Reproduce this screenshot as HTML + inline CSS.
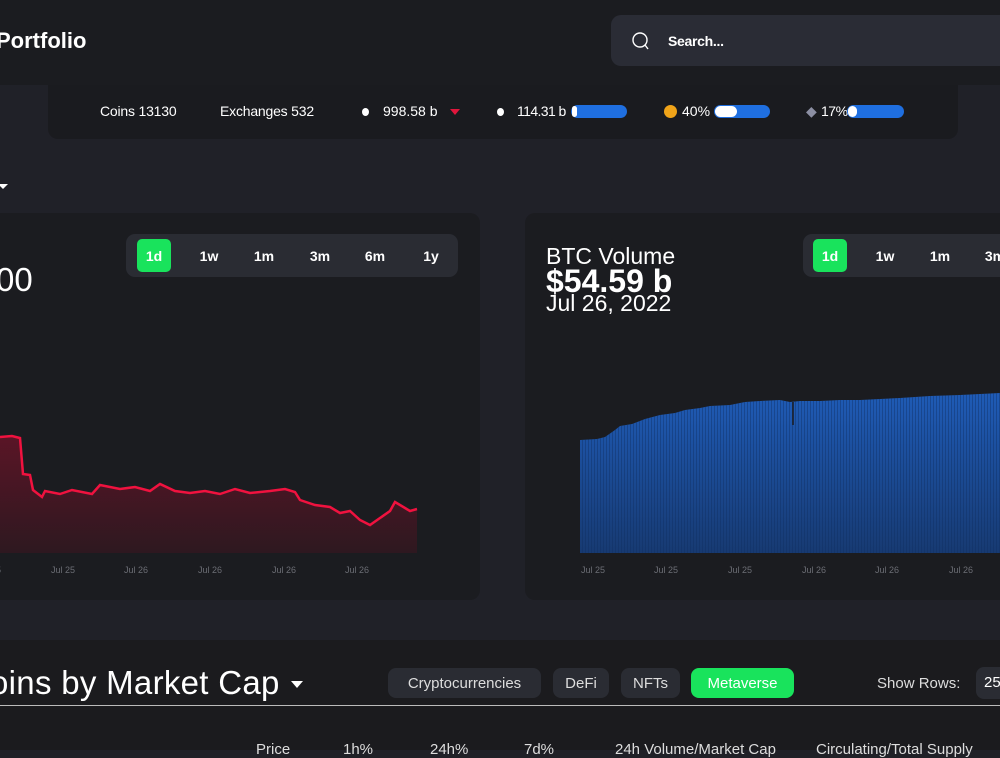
<!DOCTYPE html>
<html><head><meta charset="utf-8"><style>
*{margin:0;padding:0;box-sizing:border-box}
body{width:1000px;height:750px;overflow:hidden;background:#202128;font-family:"Liberation Sans",sans-serif;color:#fff;position:relative}
.a{position:absolute;white-space:nowrap}
.hdr{position:absolute;left:0;top:0;width:1000px;height:85px;background:#1b1c20}
.stats{position:absolute;left:48px;top:85px;width:910px;height:54px;background:#1a1b1f;border-radius:0 0 10px 10px}
.card{position:absolute;background:#1b1c20;border-radius:10px}
.sel{position:absolute;background:#2a2c33;border-radius:9px;height:43px}
.sel span{position:absolute;top:14px;font-size:14px;font-weight:bold;transform:translateX(-50%)}
.g{position:absolute;background:#19e35c;border-radius:5px;width:34px;height:33px;top:5px}
.lbl{position:absolute;font-size:9px;color:#6b6d74;top:565px}
.tab{position:absolute;top:668px;height:30px;background:#2a2c33;border-radius:8px;font-size:15px;line-height:31px;text-align:center;color:#ddd}
.bar{display:inline-block;position:absolute;top:105px;height:13px;border-radius:7px;background:#1f6fe0}
.bar i{position:absolute;left:1px;top:1px;height:11px;border-radius:6px;background:#fff}
.h{top:741px;font-size:15px;color:#ddd}
</style></head><body>
<div class="hdr"></div>
<div class="a" style="left:-4px;top:28px;font-size:22px;font-weight:bold">Portfolio</div>
<div class="a" style="left:611px;top:15px;width:400px;height:51px;background:#2a2c35;border-radius:10px"></div>
<svg class="a" style="left:631px;top:31px" width="20" height="20"><circle cx="9" cy="9" r="7" stroke="#fff" stroke-width="1.4" fill="none"/><line x1="14" y1="14" x2="17" y2="18" stroke="#fff" stroke-width="1.4"/></svg>
<div class="a" style="left:668px;top:33px;font-size:14px;font-weight:bold;letter-spacing:-0.3px">Search...</div>
<div class="stats"></div>
<div class="a" style="left:100px;top:103px;font-size:14px;letter-spacing:-0.2px">Coins 13130</div>
<div class="a" style="left:220px;top:103px;font-size:14px;letter-spacing:-0.2px">Exchanges 532</div>
<div class="a" style="left:362px;top:108px;width:7px;height:8px;border-radius:50%;background:#fff"></div>
<div class="a" style="left:383px;top:103px;font-size:14px">998.58 b</div>
<div class="a" style="left:450px;top:109px;width:0;height:0;border-left:5px solid transparent;border-right:5px solid transparent;border-top:6px solid #e0163c"></div>
<div class="a" style="left:497px;top:108px;width:7px;height:8px;border-radius:50%;background:#fff"></div>
<div class="a" style="left:517px;top:103px;font-size:14px;letter-spacing:-0.6px">114.31 b</div>
<div class="bar" style="left:571px;width:56px"><i style="width:5px"></i></div>
<div class="a" style="left:664px;top:105px;width:13px;height:13px;border-radius:50%;background:#f0a419"></div>
<div class="a" style="left:682px;top:103px;font-size:14px">40%</div>
<div class="bar" style="left:714px;width:56px"><i style="width:22px"></i></div>
<div class="a" style="left:806px;top:103px;font-size:14px;color:#8c8fa3">◆</div>
<div class="a" style="left:821px;top:103px;font-size:14px;letter-spacing:-0.5px">17%</div>
<div class="bar" style="left:847px;width:57px"><i style="width:9px"></i></div>
<div class="a" style="left:-2px;top:184px;width:0;height:0;border-left:5px solid transparent;border-right:5px solid transparent;border-top:5px solid #fff"></div>

<div class="card" style="left:-20px;top:213px;width:500px;height:387px"></div>
<div class="card" style="left:525px;top:213px;width:500px;height:387px"></div>
<div class="a" style="left:-4px;top:261px;font-size:33px">00</div>
<div class="sel" style="left:126px;top:234px;width:332px"><div class="g" style="left:11px"></div>
<span style="left:28px">1d</span><span style="left:83px">1w</span><span style="left:138px">1m</span><span style="left:194px">3m</span><span style="left:249px">6m</span><span style="left:305px">1y</span></div>
<div class="a" style="left:546px;top:243px;font-size:23px">BTC Volume</div>
<div class="a" style="left:546px;top:263px;font-size:32px;font-weight:bold">$54.59 b</div>
<div class="a" style="left:546px;top:290px;font-size:23px">Jul 26, 2022</div>
<div class="sel" style="left:803px;top:234px;width:220px"><div class="g" style="left:10px"></div>
<span style="left:27px">1d</span><span style="left:82px">1w</span><span style="left:137px">1m</span><span style="left:192px">3m</span></div>

<svg class="a" style="left:0;top:0" width="1000" height="600">
<defs><linearGradient id="r" x1="0" y1="0" x2="0" y2="1"><stop offset="0" stop-color="#5a1526"/><stop offset="1" stop-color="#2e1820"/></linearGradient>
<linearGradient id="b" x1="0" y1="0" x2="0" y2="1"><stop offset="0" stop-color="#1f5cb8"/><stop offset="1" stop-color="#173a72"/></linearGradient>
<pattern id="p" width="3" height="10" patternUnits="userSpaceOnUse"><rect width="1" height="10" fill="#0f2e5e" opacity=".4"/></pattern>
<clipPath id="c"><polygon points="580,440 597,439 605,437 615,430 620,426 632,424 645,419 660,415 675,413 685,410 700,408 710,406 730,405 745,402 760,401 780,400 790,402 800,401 820,401 840,400 860,400 880,399 900,398 930,396 960,395 1000,393 1000,553 580,553"/></clipPath></defs>
<polygon fill="url(#r)" points="0,437 12,436 20,438 23,474 30,475 33,490 42,497 45,491 60,494 72,490 92,494 100,485 120,489 135,487 150,491 160,484 175,491 190,493 205,491 220,494 235,489 250,493 270,491 285,489 295,492 300,500 315,505 330,507 340,513 350,511 360,520 370,525 380,518 390,511 395,502 405,508 410,511 417,509 417,553 0,553"/>
<polyline fill="none" stroke="#f0123f" stroke-width="2.5" points="0,437 12,436 20,438 23,474 30,475 33,490 42,497 45,491 60,494 72,490 92,494 100,485 120,489 135,487 150,491 160,484 175,491 190,493 205,491 220,494 235,489 250,493 270,491 285,489 295,492 300,500 315,505 330,507 340,513 350,511 360,520 370,525 380,518 390,511 395,502 405,508 410,511 417,509"/>
<g clip-path="url(#c)"><rect x="580" y="390" width="420" height="163" fill="url(#b)"/><rect x="580" y="390" width="420" height="163" fill="url(#p)"/></g>
<line x1="793" y1="402" x2="793" y2="425" stroke="#1b1c20" stroke-width="1.5"/>
</svg>
<div class="lbl" style="left:-4px">5</div><div class="lbl" style="left:51px">Jul 25</div><div class="lbl" style="left:124px">Jul 26</div><div class="lbl" style="left:198px">Jul 26</div><div class="lbl" style="left:272px">Jul 26</div><div class="lbl" style="left:345px">Jul 26</div>
<div class="lbl" style="left:581px">Jul 25</div><div class="lbl" style="left:654px">Jul 25</div><div class="lbl" style="left:728px">Jul 25</div><div class="lbl" style="left:802px">Jul 26</div><div class="lbl" style="left:875px">Jul 26</div><div class="lbl" style="left:949px">Jul 26</div>

<div class="a" style="left:0;top:640px;width:1000px;height:110px;background:#1b1b1e"></div>
<div class="a" style="left:-10px;top:664px;font-size:33px;letter-spacing:0.3px">oins by Market Cap</div>
<div class="a" style="left:291px;top:681px;width:0;height:0;border-left:6px solid transparent;border-right:6px solid transparent;border-top:7px solid #fff"></div>
<div class="tab" style="left:388px;width:153px">Cryptocurrencies</div>
<div class="tab" style="left:553px;width:56px">DeFi</div>
<div class="tab" style="left:621px;width:59px">NFTs</div>
<div class="tab" style="left:691px;width:103px;background:#19e35c;color:#fff">Metaverse</div>
<div class="a" style="left:877px;top:675px;font-size:15px;color:#ddd">Show Rows:</div>
<div class="a" style="left:976px;top:667px;width:40px;height:32px;background:#2a2c33;border-radius:8px;font-size:15px;line-height:32px;padding-left:8px">25</div>
<div class="a" style="left:0;top:705px;width:1000px;height:1px;background:#bbb"></div>
<div class="a h" style="left:256px">Price</div>
<div class="a h" style="left:343px">1h%</div>
<div class="a h" style="left:430px">24h%</div>
<div class="a h" style="left:524px">7d%</div>
<div class="a h" style="left:615px">24h Volume/Market Cap</div>
<div class="a h" style="left:816px">Circulating/Total Supply</div>
</body></html>
